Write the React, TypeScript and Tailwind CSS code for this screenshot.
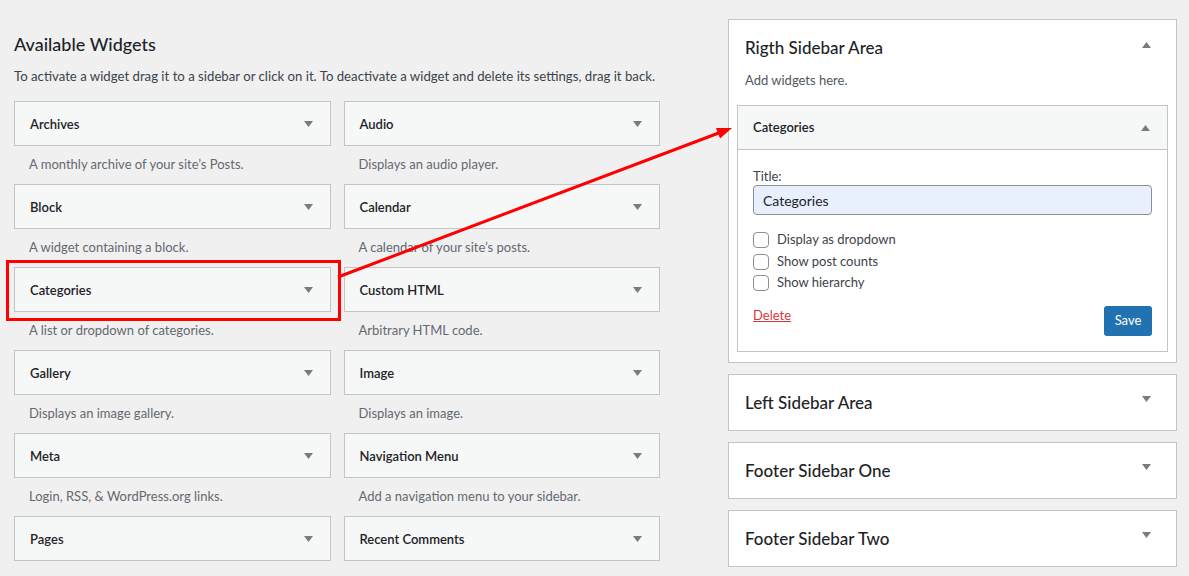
import React from 'react';

const widgets: { name: string; desc: string }[] = [
  { name: 'Archives', desc: 'A monthly archive of your site\u2019s Posts.' },
  { name: 'Audio', desc: 'Displays an audio player.' },
  { name: 'Block', desc: 'A widget containing a block.' },
  { name: 'Calendar', desc: 'A calendar of your site\u2019s posts.' },
  { name: 'Categories', desc: 'A list or dropdown of categories.' },
  { name: 'Custom HTML', desc: 'Arbitrary HTML code.' },
  { name: 'Gallery', desc: 'Displays an image gallery.' },
  { name: 'Image', desc: 'Displays an image.' },
  { name: 'Meta', desc: 'Login, RSS, & WordPress.org links.' },
  { name: 'Navigation Menu', desc: 'Add a navigation menu to your sidebar.' },
  { name: 'Pages', desc: '' },
  { name: 'Recent Comments', desc: '' },
];

const Caret: React.FC<{ up?: boolean }> = ({ up }) => (
  <svg width="9" height="6" viewBox="0 0 9 6" className="shrink-0">
    {up ? <path d="M4.5 0 L9 6 L0 6 Z" fill="#787c82" /> : <path d="M0 0 L9 0 L4.5 6 Z" fill="#787c82" />}
  </svg>
);

const WidgetItem: React.FC<{ name: string; desc: string }> = ({ name, desc }) => (
  <div>
    <div className="h-[45px] border border-[#c3c4c7] bg-[#f6f7f7] flex items-center justify-between pl-[15px] pr-[17px]">
      <span className="text-[13px] font-semibold text-[#1d2327] pt-[2px]">{name}</span>
      <Caret />
    </div>
    <div className="h-[38px] flex items-center pl-[15px] text-[13px] text-[#646970] whitespace-nowrap">{desc}</div>
  </div>
);

const Checkbox: React.FC<{ label: string }> = ({ label }) => (
  <label className="flex items-center gap-[8px] h-[16px]">
    <span className="w-[16px] h-[16px] rounded-[4px] border border-[#8c8f94] bg-white" />
    <span className="text-[13px] text-[#3c434a]">{label}</span>
  </label>
);

const SidebarClosed: React.FC<{ title: string }> = ({ title }) => (
  <div className="h-[57px] border border-[#c3c4c7] bg-white flex items-center justify-between pl-[16px] pr-[25px]">
    <h2 className="text-[17px] font-medium text-[#1d2327] leading-[24px] pt-[1px]">{title}</h2>
    <span className="-mt-[8px]"><Caret /></span>
  </div>
);

export default function App() {
  return (
    <div
      className="relative h-[576px] overflow-hidden bg-[#f0f0f1] flex pl-[14px] gap-[68px]"
      style={{ fontFamily: 'Lato, "Noto Sans", sans-serif' }}
    >
      {/* Available widgets */}
      <div className="w-[646px] shrink-0">
        <h2 className="text-[18px] leading-[24px] font-medium text-[#1d2327] mt-[32px]">Available Widgets</h2>
        <p className="text-[13.2px] leading-[20px] text-[#3c434a] mt-[10px] whitespace-nowrap">
          To activate a widget drag it to a sidebar or click on it. To deactivate a widget and delete its settings, drag it back.
        </p>
        <div className="grid grid-cols-2 gap-x-[13px] mt-[15px]">
          {widgets.map((w) => (
            <WidgetItem key={w.name} name={w.name} desc={w.desc} />
          ))}
        </div>
      </div>

      {/* Sidebars */}
      <div className="w-[449px] shrink-0 pt-[19px] flex flex-col gap-[11px]">
        <div className="border border-[#c3c4c7] bg-white pb-[10px]">
          <div className="flex items-center justify-between pl-[16px] pr-[25px] pt-[16px]">
            <h2 className="text-[17px] leading-[24px] font-medium text-[#1d2327]">Rigth Sidebar Area</h2>
            <span className="-mt-[6px]"><Caret up /></span>
          </div>
          <p className="pl-[16px] mt-[10px] text-[13px] leading-[20px] text-[#50575e]">Add widgets here.</p>
          <div className="mx-[8px] mt-[15px] border border-[#c3c4c7] bg-white">
            <div className="h-[44px] bg-[#f6f7f7] border-b border-[#c3c4c7] flex items-center justify-between pl-[15px] pr-[17px]">
              <span className="text-[13px] font-semibold text-[#1d2327]">Categories</span>
              <Caret up />
            </div>
            <div className="px-[15px] pt-[17px] pb-[15px]">
              <div className="text-[13px] leading-[18px] text-[#3c434a]">Title:</div>
              <div className="h-[30px] rounded-[4px] border border-[#8c8f94] bg-[#e8f0fe] flex items-center px-[9px] text-[14px] text-[#1d2327]">
                Categories
              </div>
              <div className="flex flex-col gap-[5.5px] mt-[17px]">
                <Checkbox label="Display as dropdown" />
                <Checkbox label="Show post counts" />
                <Checkbox label="Show hierarchy" />
              </div>
              <div className="flex items-start justify-between mt-[15px]">
                <span className="text-[13px] leading-[18px] text-[#d63638] underline">Delete</span>
                <button className="h-[30px] w-[48px] rounded-[3px] bg-[#2271b1] text-white text-[13px]">Save</button>
              </div>
            </div>
          </div>
        </div>
        <SidebarClosed title="Left Sidebar Area" />
        <SidebarClosed title="Footer Sidebar One" />
        <SidebarClosed title="Footer Sidebar Two" />
      </div>

      {/* annotation overlay */}
      <svg className="absolute left-0 top-0 pointer-events-none" width="1189" height="576">
        <rect x="7.5" y="261.5" width="332" height="58" fill="none" stroke="#ff0000" strokeWidth="3" />
        <line x1="338" y1="277" x2="720" y2="132.5" stroke="#ff0000" strokeWidth="3" />
        <polygon points="732,128 716,128 720,138.5" fill="#ff0000" />
      </svg>
    </div>
  );
}
